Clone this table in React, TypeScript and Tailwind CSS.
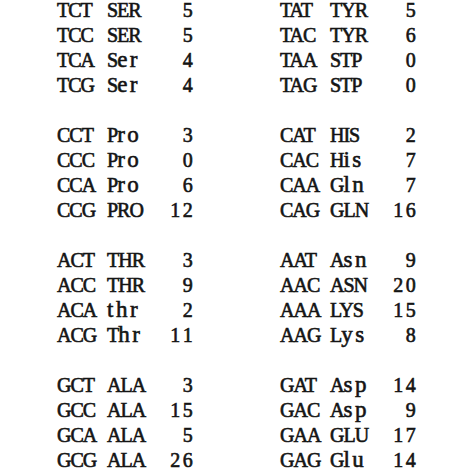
type Row = [string, string, number];

const left: Row[][] = [
  [["TCT", "SER", 5], ["TCC", "SER", 5], ["TCA", "Ser", 4], ["TCG", "Ser", 4]],
  [["CCT", "Pro", 3], ["CCC", "Pro", 0], ["CCA", "Pro", 6], ["CCG", "PRO", 12]],
  [["ACT", "THR", 3], ["ACC", "THR", 9], ["ACA", "thr", 2], ["ACG", "Thr", 11]],
  [["GCT", "ALA", 3], ["GCC", "ALA", 15], ["GCA", "ALA", 5], ["GCG", "ALA", 26]],
];

const right: Row[][] = [
  [["TAT", "TYR", 5], ["TAC", "TYR", 6], ["TAA", "STP", 0], ["TAG", "STP", 0]],
  [["CAT", "HIS", 2], ["CAC", "His", 7], ["CAA", "Gln", 7], ["CAG", "GLN", 16]],
  [["AAT", "Asn", 9], ["AAC", "ASN", 20], ["AAA", "LYS", 15], ["AAG", "Lys", 8]],
  [["GAT", "Asp", 14], ["GAC", "Asp", 9], ["GAA", "GLU", 17], ["GAG", "Glu", 14]],
];

// elite typewriter look: caps a touch tight, lowercase larger and spaced out
function Word({ text, className }: { text: string; className?: string }) {
  const head = text.replace(/[a-z].*$/, "");
  const tail = text.slice(head.length);
  return (
    <span className={"whitespace-nowrap " + (className ?? "")}>
      <span className="tracking-[-1px]">{head}</span>
      {tail && <span className="text-[23px] tracking-[2.5px]">{tail}</span>}
    </span>
  );
}

// digits sit in fixed 12.5px cells so columns line up
function Count({ n }: { n: number }) {
  return (
    <span className="flex w-[49px] justify-end">
      {String(n)
        .split("")
        .map((d, i) => (
          <span key={i} className="inline-block w-[12.5px] text-center">
            {d}
          </span>
        ))}
    </span>
  );
}

function Column({ groups }: { groups: Row[][] }) {
  return (
    <div className="flex flex-col gap-[25px]">
      {groups.map((group, g) => (
        <div key={g} className="flex flex-col">
          {group.map(([codon, aa, n]) => (
            <div key={codon} className="flex h-[25px] items-start">
              <Word text={codon} className="w-[50px]" />
              <Word text={aa} className="w-[38px]" />
              <Count n={n} />
            </div>
          ))}
        </div>
      ))}
    </div>
  );
}

export default function App() {
  return (
    <div
      className="h-[474px] w-[474px] overflow-hidden bg-white pl-[57px] text-[20px] leading-[20px] text-[#141414] [-webkit-text-stroke:0.6px_#141414]"
      style={{ fontFamily: '"Liberation Serif", "Times New Roman", serif' }}
    >
      <div className="flex">
        <div className="w-[223px]">
          <Column groups={left} />
        </div>
        <Column groups={right} />
      </div>
    </div>
  );
}
